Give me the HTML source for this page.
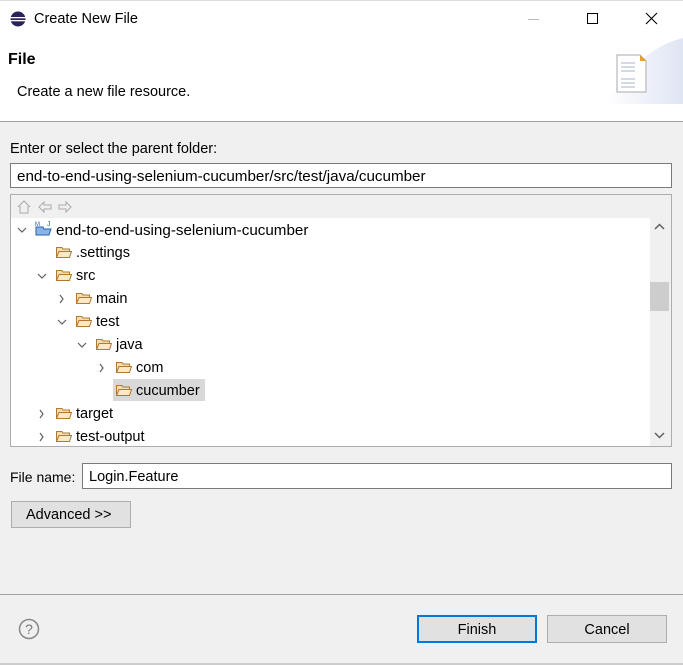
<!DOCTYPE html>
<html><head><style>
*{margin:0;padding:0;box-sizing:border-box}
body{width:683px;height:665px;background:#f0f0f0;font-family:"Liberation Sans",sans-serif;font-size:14.5px;color:#000;position:relative;overflow:hidden}
.a{position:absolute;white-space:nowrap}
.f{position:absolute;width:16px;height:12px}
</style></head><body>
<div class="a" style="left:0;top:0;width:683px;height:121px;background:#fff"></div>
<div class="a" style="left:0;top:121px;width:683px;height:1px;background:#a0a0a0"></div>
<div class="a" style="left:0;top:0;width:683px;height:1px;background:#ddd"></div>
<svg class="a" style="left:10px;top:11px" width="16" height="16"><circle cx="8" cy="8" r="7.5" fill="#2c2255"/><rect x="0" y="6" width="16" height="1.3" fill="#fff"/><rect x="0" y="9" width="16" height="1.3" fill="#fff"/></svg>
<div class="a" style="left:34px;top:11px;font-size:14.5px">Create New File</div>
<div class="a" style="left:528px;top:19px;width:11px;height:1px;background:#bbb"></div>
<div class="a" style="left:587px;top:13px;width:11px;height:11px;border:1px solid #000"></div>
<svg class="a" style="left:645px;top:12px" width="13" height="13"><path d="M1 1L12 12M12 1L1 12" stroke="#000" stroke-width="1.1"/></svg>
<div class="a" style="left:8px;top:51px;font-size:16px;font-weight:bold">File</div>
<div class="a" style="left:17px;top:84px">Create a new file resource.</div>
<svg class="a" style="left:600px;top:38px" width="83" height="66"><defs><linearGradient id="g" x1="0" y1="0" x2="1" y2="0"><stop offset="0" stop-color="#fff"/><stop offset="1" stop-color="#dfe5f3"/></linearGradient></defs><path d="M5 66 Q40 10 83 0 V66Z" fill="url(#g)"/><path d="M17 17H40L46 23V54H17Z" fill="#fff" stroke="#aaa"/><path d="M40 17V23H46" fill="#e89a3c"/><g stroke="#b8c4d8" stroke-width="1.3"><path d="M21 25H35M21 29H35M21 33H35M21 41H35M21 45H35M21 49H35"/></g></svg>
<div class="a" style="left:10px;top:141px">Enter or select the parent folder:</div>
<div class="a" style="left:10px;top:163px;width:662px;height:25px;background:#fff;border:1px solid #7a7a7a"></div>
<div class="a" style="left:17px;top:168px;font-size:15.2px">end-to-end-using-selenium-cucumber/src/test/java/cucumber</div>
<div class="a" style="left:10px;top:194px;width:662px;height:253px;border:1px solid #adadad;background:#f0f0f0"></div>
<div class="a" style="left:11px;top:218px;width:639px;height:228px;background:#fff"></div>
<div class="a" style="left:650px;top:282px;width:19px;height:29px;background:#cdcdcd"></div>
<svg class="a" style="left:654px;top:223px" width="11" height="8"><path d="M1 6L5.5 1.5L10 6" fill="none" stroke="#606060" stroke-width="1.5"/></svg>
<svg class="a" style="left:654px;top:431px" width="11" height="8"><path d="M1 2L5.5 6.5L10 2" fill="none" stroke="#606060" stroke-width="1.5"/></svg>
<svg class="a" style="left:17px;top:199px" width="62" height="16" fill="none" stroke="#aaa"><path d="M1 8L7 2L13 8M3 7V14H11V7"/><path d="M22 8L27 3V6H34V10H27V13Z"/><path d="M54 8L49 3V6H42V10H49V13Z"/></svg>
<div class="a" style="left:113px;top:379px;width:92px;height:22px;background:#d9d9d9"></div>
<svg class="a" style="left:0;top:218px" width="330" height="230" fill="none" stroke="#606060" stroke-width="1.2">
<path d="M18 10L22 14L26 10"/><path d="M38 56L42 60L46 56"/><path d="M60 77L63 81L60 85"/><path d="M58 102L62 106L66 102"/><path d="M78 125L82 129L86 125"/><path d="M100 146L103 150L100 154"/><path d="M40 192L43 196L40 200"/><path d="M40 215L43 219L40 223"/>
</svg>
<svg class="a" style="left:35px;top:220px" width="18" height="16"><text x="0" y="6" font-size="6" fill="#2a5fa8" font-family="Liberation Sans">M</text><text x="12" y="6" font-size="7" fill="#2a5fa8" font-family="Liberation Sans">J</text><path d="M1 7H8L9 9H16L14 15H1Z" fill="#8ab4e8" stroke="#2a5fa8"/></svg>
<div class="a" style="left:56px;top:222px;font-size:15.2px">end-to-end-using-selenium-cucumber</div>
<svg width="0" height="0" style="position:absolute"><defs><g id="fo"><path d="M0.5 1.5H6L7 3H13.5V11.5H0.5Z" fill="#f6dca8" stroke="#b07830"/><path d="M3 5.5H15.5L13.5 11.5H0.5Z" fill="#fbe9c6" stroke="#b07830"/></g></defs></svg>
<svg class="f" style="left:56px;top:246px"><use href="#fo"/></svg><div class="a" style="left:76px;top:245px">.settings</div>
<svg class="f" style="left:56px;top:269px"><use href="#fo"/></svg><div class="a" style="left:76px;top:268px">src</div>
<svg class="f" style="left:76px;top:292px"><use href="#fo"/></svg><div class="a" style="left:96px;top:291px">main</div>
<svg class="f" style="left:76px;top:315px"><use href="#fo"/></svg><div class="a" style="left:96px;top:314px">test</div>
<svg class="f" style="left:96px;top:338px"><use href="#fo"/></svg><div class="a" style="left:116px;top:337px">java</div>
<svg class="f" style="left:116px;top:361px"><use href="#fo"/></svg><div class="a" style="left:136px;top:360px">com</div>
<svg class="f" style="left:116px;top:384px"><use href="#fo"/></svg><div class="a" style="left:136px;top:383px">cucumber</div>
<svg class="f" style="left:56px;top:407px"><use href="#fo"/></svg><div class="a" style="left:76px;top:406px">target</div>
<svg class="f" style="left:56px;top:430px"><use href="#fo"/></svg><div class="a" style="left:76px;top:429px">test-output</div>
<div class="a" style="left:10px;top:469px;font-size:14px">File name:</div>
<div class="a" style="left:82px;top:463px;width:590px;height:26px;background:#fff;border:1px solid #7a7a7a"></div>
<div class="a" style="left:89px;top:469px">Login.Feature</div>
<div class="a" style="left:11px;top:501px;width:120px;height:27px;background:#e1e1e1;border:1px solid #adadad"></div>
<div class="a" style="left:26px;top:507px">Advanced &gt;&gt;</div>
<div class="a" style="left:0;top:594px;width:683px;height:1px;background:#a0a0a0"></div>
<svg class="a" style="left:18px;top:618px" width="22" height="22"><circle cx="11" cy="11" r="9.5" fill="none" stroke="#888" stroke-width="1.5"/><text x="11" y="16" font-size="14" text-anchor="middle" fill="#777" font-family="Liberation Sans">?</text></svg>
<div class="a" style="left:417px;top:615px;width:120px;height:28px;background:#e1e1e1;border:2px solid #0078d7"></div>
<div class="a" style="left:417px;top:622px;width:120px;text-align:center">Finish</div>
<div class="a" style="left:547px;top:615px;width:120px;height:28px;background:#e1e1e1;border:1px solid #adadad"></div>
<div class="a" style="left:547px;top:622px;width:120px;text-align:center">Cancel</div>
<div class="a" style="left:0;top:663px;width:683px;height:2px;background:#ccc"></div>
</body></html>
